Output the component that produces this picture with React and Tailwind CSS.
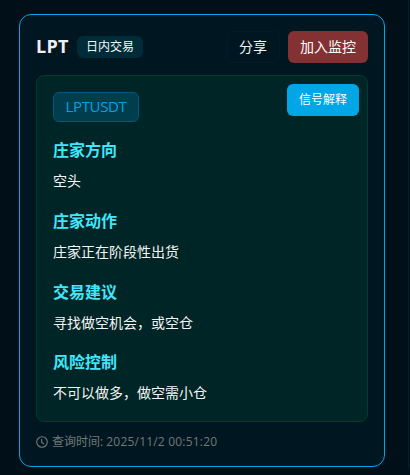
const sections = [
  { title: '庄家方向', text: '空头' },
  { title: '庄家动作', text: '庄家正在阶段性出货' },
  { title: '交易建议', text: '寻找做空机会，或空仓' },
  { title: '风险控制', text: '不可以做多，做空需小仓' },
];

function ClockIcon() {
  return (
    <svg
      className="w-3 h-3 shrink-0"
      viewBox="0 0 12 12"
      fill="none"
      stroke="currentColor"
      strokeWidth="1.1"
      strokeLinecap="round"
    >
      <circle cx="6" cy="6" r="5.3" />
      <path d="M5.6 3.2V6.2L7.6 7.7" />
    </svg>
  );
}

function Section({ title, text }) {
  return (
    <section className="h-[70.8px]">
      <h3 className="text-base leading-6 font-bold text-[#40e7fb]">{title}</h3>
      <p className="mt-2 text-sm leading-[22px] text-[#f5f5f5]">{text}</p>
    </section>
  );
}

export default function App() {
  return (
    <div className="flex h-[475px] w-[410px] overflow-hidden bg-[#000f18] pt-3.5 pl-[19px] font-['Open_Sans','Noto_Sans_CJK_SC',sans-serif]">
      <div className="h-[453px] w-[366px] shrink-0 rounded-xl border border-[#00a6e6] bg-[#001721] px-4 pt-4">
        {/* Header */}
        <div className="flex h-8 items-center">
          <h2 className="w-[41px] pb-0.5 text-lg leading-7 font-bold tracking-[0.3px] text-[#f0f0f0]">
            LPT
          </h2>
          <span className="flex h-[22px] w-[66px] items-center justify-center rounded-md bg-[#002c39] text-xs text-[#f5f5f5]">
            日内交易
          </span>
          <button
            type="button"
            className="ml-auto h-8 w-[54px] rounded-md border border-[#021c27] bg-[#001620] text-sm text-[#f5f5f5]"
          >
            分享
          </button>
          <button
            type="button"
            className="ml-2 h-8 w-20 rounded-md bg-[#843134] text-sm text-white"
          >
            加入监控
          </button>
        </div>

        {/* Signal detail */}
        <div className="relative mt-3 h-[347px] rounded-lg border border-[#033b2e] bg-[#002526] px-4 pt-4">
          <span className="flex h-[30px] w-[86px] items-center justify-center rounded-md border border-[#00587a] bg-[#003d4d] pb-0.5 text-[15px] tracking-[-0.35px] text-[#00a3e2]">
            LPTUSDT
          </span>
          <button
            type="button"
            className="absolute top-2 right-2 h-8 w-[72px] rounded-md bg-[#00a6e6] text-xs text-white"
          >
            信号解释
          </button>
          <div className="mt-4">
            {sections.map(s => (
              <Section key={s.title} title={s.title} text={s.text} />
            ))}
          </div>
        </div>

        {/* Query time */}
        <div className="mt-2.5 flex items-center gap-1 text-xs leading-5 text-[#737977]">
          <ClockIcon />
          <span>
            查询时间: <span className="tracking-[0.2px]">2025/11/2 00:51:20</span>
          </span>
        </div>
      </div>

      {/* Edge of the next column */}
      <div className="-mt-3.5 ml-[23px] h-[469px] w-px shrink-0 bg-[#00202c]" />
    </div>
  );
}
